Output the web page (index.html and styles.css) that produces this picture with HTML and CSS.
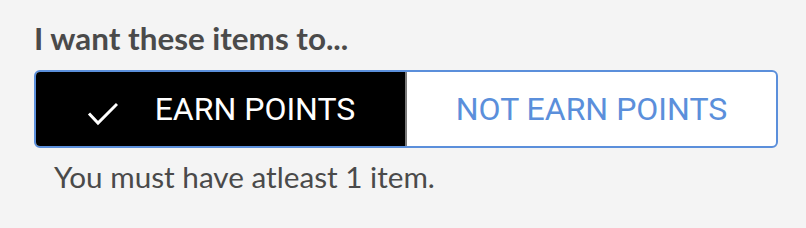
FILE: index.html
```html
<!DOCTYPE html>
<html lang="en">
<head>
    <meta charset="UTF-8">
    <meta name="viewport" content="width=device-width, initial-scale=1.0">
    <title>Points setting</title>
    <link rel="stylesheet" href="styles.css">
</head>
<body>
    <div class="field">
        <div class="label">I want these items to...</div>
        <div class="toggle">
            <div class="option selected">
                <svg class="check" width="32" height="26" viewBox="0 0 32 26">
                    <path d="M3 12.5 L12 22 L31 3" fill="none" stroke="white" stroke-width="3"/>
                </svg>
                <span>EARN POINTS</span>
            </div>
            <div class="option">
                <span>NOT EARN POINTS</span>
            </div>
        </div>
        <div class="hint">You must have atleast 1 item.</div>
    </div>
</body>
</html>
```

FILE: styles.css
```css
*{
    margin: 0;
    padding: 0;
    box-sizing: border-box;
}
body{
    background: #f4f4f4;
    font-family: "Lato", "Noto Sans", sans-serif;
}
.field{
    padding: 19px 28px 0 34px;
}
.label{
    font-size: 31.4px;
    font-weight: bold;
    color: #4a4a4a;
    line-height: 38px;
    margin-bottom: 13px;
}
.toggle{
    display: flex;
    height: 78px;
    border: 2px solid #5b8fdb;
    border-radius: 6px;
    overflow: hidden;
    background: white;
}
.option{
    flex: 1;
    display: flex;
    justify-content: center;
    align-items: center;
    font-family: Roboto, sans-serif;
    font-size: 32px;
    color: #5b8fdb;
}
.selected{
    background: black;
    color: white;
    border-right: 2px solid #7a7a7a;
}
.check{
    margin-right: 37px;
    margin-top: 10px;
}
.hint{
    margin: 11px 0 0 20px;
    font-size: 29.7px;
    line-height: 36px;
    color: #4a4a4a;
}
```
